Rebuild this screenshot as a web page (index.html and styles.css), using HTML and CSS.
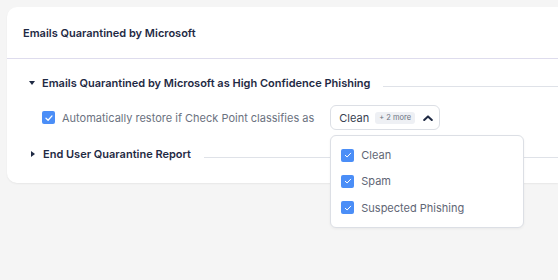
FILE: index.html
```html
<!DOCTYPE html>
<html lang="en">
<head>
  <meta charset="UTF-8">
  <title>Quarantine settings</title>
  <link rel="stylesheet" href="styles.css">
</head>
<body>
  <div class="card">
    <div class="card-header">Emails Quarantined by Microsoft</div>
    <div class="card-body">
      <div class="section">
        <div class="section-title">
          <span class="caret down"></span>
          <span class="section-text">Emails Quarantined by Microsoft as High Confidence Phishing</span>
          <span class="section-line"></span>
        </div>
        <div class="option-row">
          <span class="check"><svg viewBox="0 0 12 12" width="12" height="12"><path d="M3 6.2 L5.1 8.2 L9 3.9" fill="none" stroke="#fff" stroke-width="1.3" stroke-linecap="round" stroke-linejoin="round"/></svg></span>
          <span class="option-label">Automatically restore if Check Point classifies as</span>
          <div class="select-wrap">
            <div class="select">
              <span class="select-value">Clean</span>
              <span class="more-badge">+ 2 more</span>
              <svg class="chevron" viewBox="0 0 10 6" width="10" height="6"><path d="M1.2 5 L5 1.4 L8.8 5" fill="none" stroke="#1f2a44" stroke-width="2" stroke-linecap="round" stroke-linejoin="round"/></svg>
            </div>
            <div class="menu">
              <div class="menu-item">
                <span class="check"><svg viewBox="0 0 12 12" width="12" height="12"><path d="M3.3 6.3 L5.1 8 L8.7 4.2" fill="none" stroke="#fff" stroke-width="1" stroke-linecap="round" stroke-linejoin="round"/></svg></span>
                <span>Clean</span>
              </div>
              <div class="menu-item">
                <span class="check"><svg viewBox="0 0 12 12" width="12" height="12"><path d="M3.3 6.3 L5.1 8 L8.7 4.2" fill="none" stroke="#fff" stroke-width="1" stroke-linecap="round" stroke-linejoin="round"/></svg></span>
                <span>Spam</span>
              </div>
              <div class="menu-item">
                <span class="check"><svg viewBox="0 0 12 12" width="12" height="12"><path d="M3.3 6.3 L5.1 8 L8.7 4.2" fill="none" stroke="#fff" stroke-width="1" stroke-linecap="round" stroke-linejoin="round"/></svg></span>
                <span>Suspected Phishing</span>
              </div>
            </div>
          </div>
        </div>
      </div>
      <div class="section">
        <div class="section-title">
          <span class="caret right"></span>
          <span class="section-text">End User Quarantine Report</span>
          <span class="section-line"></span>
        </div>
      </div>
    </div>
  </div>
</body>
</html>
```

FILE: styles.css
```css
html, body {
  height: 100%;
}

body {
  margin: 0;
  background-color: #f5f5f5;
  font-family: 'Inter', 'Roboto', sans-serif;
  color: #1f2a44;
  padding-top: 7px;
  box-sizing: border-box;
}

.card {
  margin-left: 7px;
  background-color: #fff;
  border-radius: 10px 0 0 10px;
  box-shadow: 0 1px 2px rgba(0, 0, 0, 0.06);
  height: 176px;
}

.card-header {
  height: 51px;
  padding-left: 16px;
  display: flex;
  align-items: center;
  font-size: 11px;
  font-weight: 600;
  border-bottom: 1px solid #dedced;
}

.card-body {
  padding: 13px 0 0 22px;
}

.section-title {
  display: flex;
  align-items: center;
  height: 22px;
}

.caret {
  width: 0;
  height: 0;
}

.caret.down {
  border-left: 3.5px solid transparent;
  border-right: 3.5px solid transparent;
  border-top: 4px solid #1f2a44;
  margin-right: 7px;
}

.caret.right {
  border-top: 3.5px solid transparent;
  border-bottom: 3.5px solid transparent;
  border-left: 4px solid #1f2a44;
  margin-left: 2px;
  margin-right: 8px;
}

.section-text {
  font-size: 11px;
  font-weight: 600;
  white-space: nowrap;
}

.section-line {
  flex: 1;
  height: 1px;
  background-color: #dfe2e8;
  margin: 7px 0 0 13px;
}

.option-row {
  display: flex;
  align-items: center;
  padding-left: 13px;
  margin-top: 11px;
  height: 25px;
}

.check {
  width: 13px;
  height: 13px;
  border-radius: 2px;
  background-color: #4b8ef7;
  display: inline-flex;
  align-items: center;
  justify-content: center;
  flex-shrink: 0;
}

.option-label {
  font-size: 11px;
  color: #6b7280;
  margin-left: 7px;
  white-space: nowrap;
}

.select-wrap {
  position: relative;
  margin-left: 16px;
}

.select {
  width: 110px;
  height: 25px;
  border: 1px solid #dcdfe5;
  border-radius: 6px;
  display: flex;
  align-items: center;
  padding-left: 8px;
  box-sizing: border-box;
}

.select-value {
  font-size: 11px;
  color: #374151;
}

.more-badge {
  margin-left: 6px;
  background-color: #eef0f4;
  color: #6b7280;
  font-size: 7.5px;
  line-height: 12px;
  border-radius: 3px;
  padding: 0 4px;
}

.chevron {
  margin-left: 8px;
}

.menu {
  position: absolute;
  z-index: 10;
  top: 30px;
  left: 0;
  width: 194px;
  height: 93px;
  background-color: #fff;
  border: 1px solid #dcdfe5;
  border-radius: 6px;
  box-shadow: 0 1px 3px rgba(0, 0, 0, 0.05);
  padding-top: 6px;
  box-sizing: border-box;
}

.menu-item {
  display: flex;
  align-items: center;
  height: 26.3px;
  padding-left: 10px;
  font-size: 11px;
  color: #5f6675;
}

.menu-item .check {
  margin-right: 7px;
}

.section + .section {
  margin-top: 13px;
}
```
